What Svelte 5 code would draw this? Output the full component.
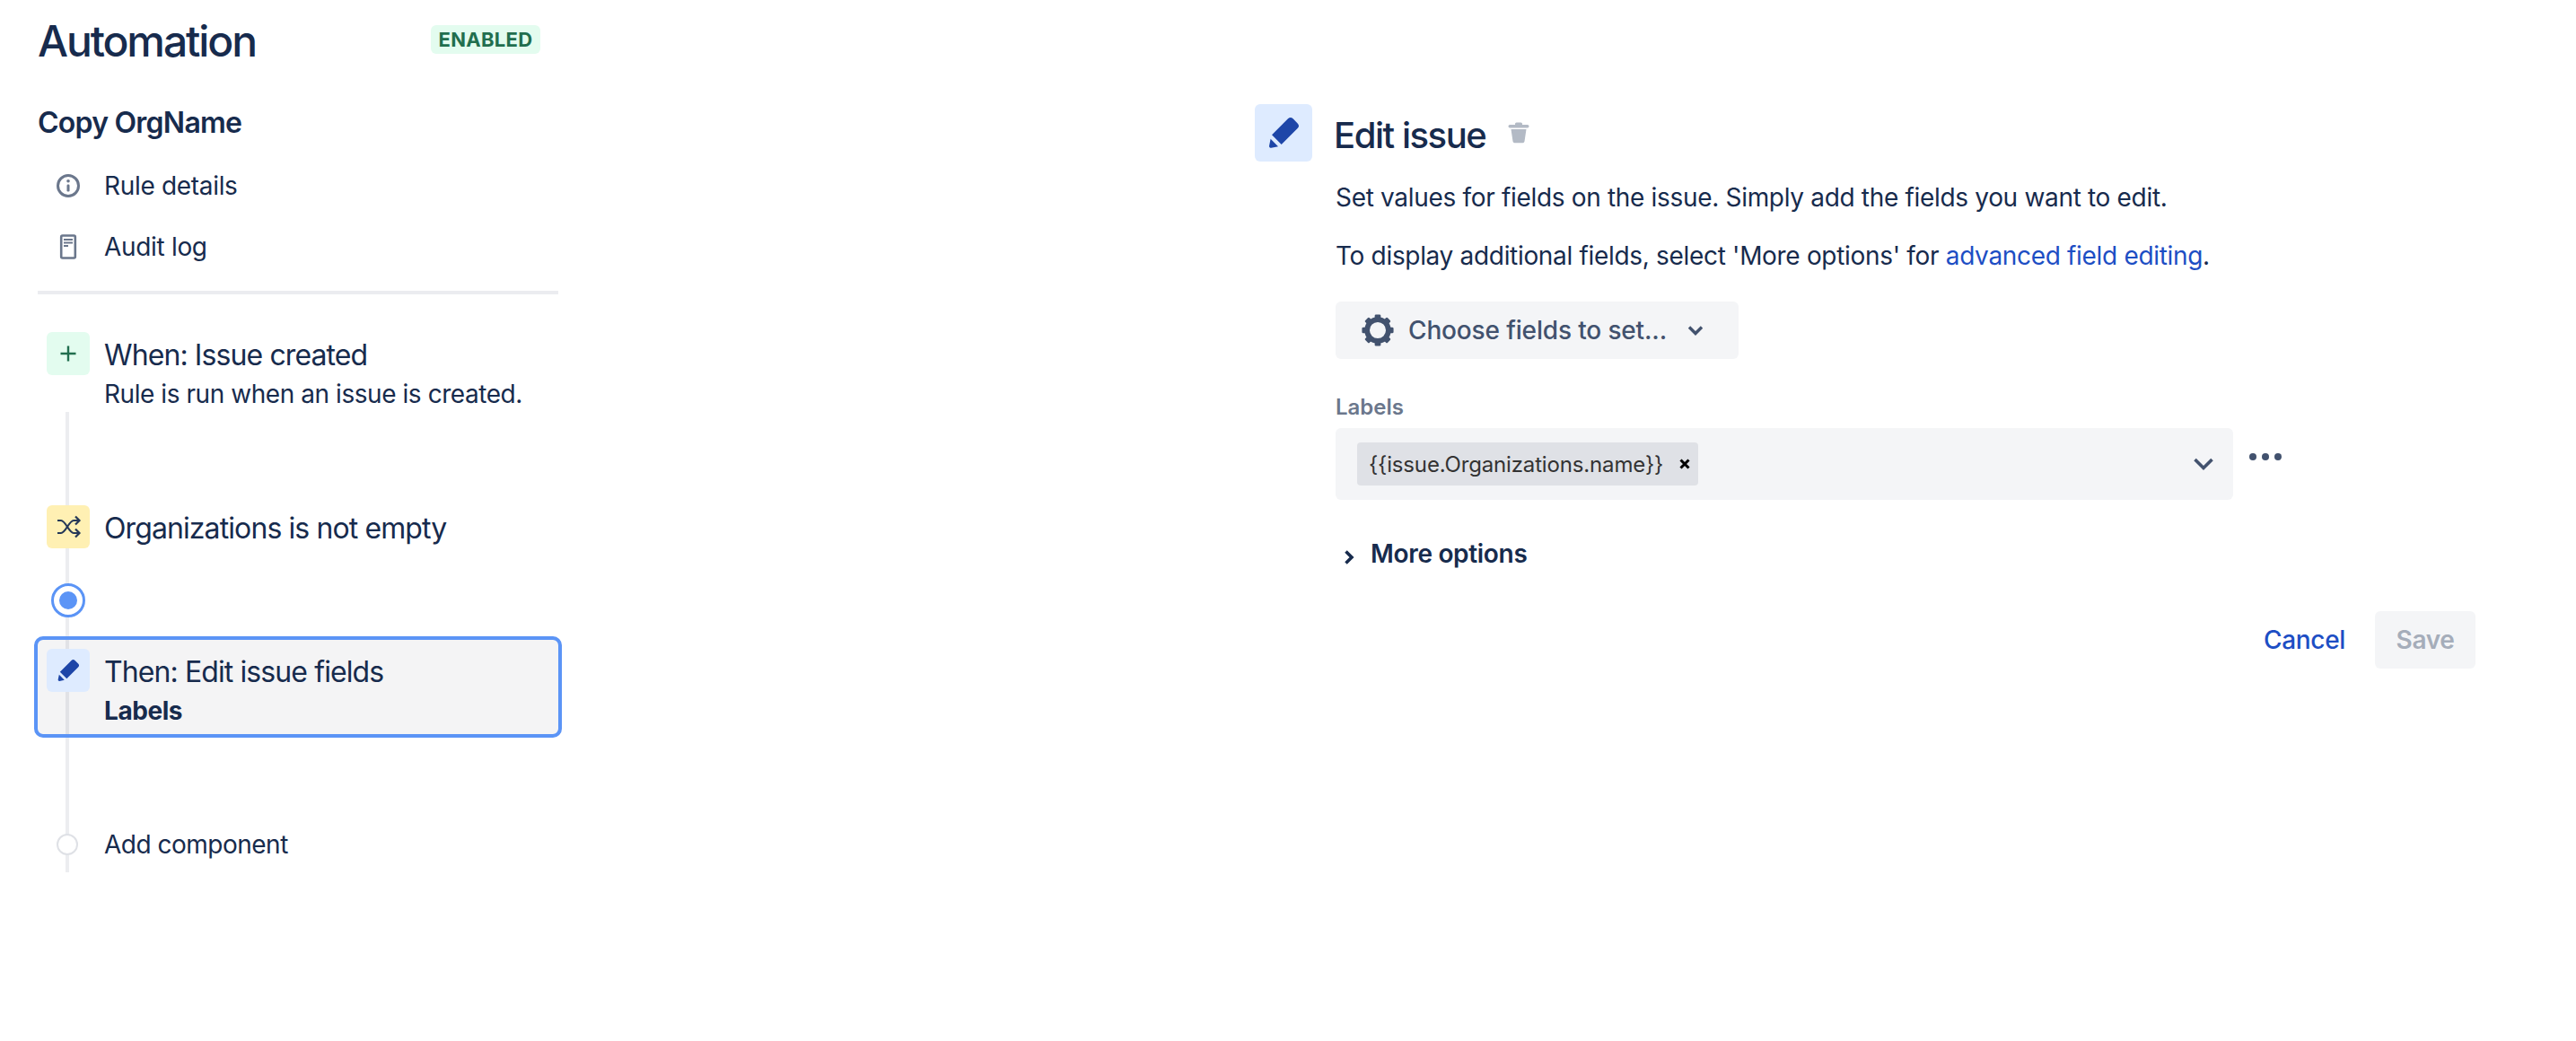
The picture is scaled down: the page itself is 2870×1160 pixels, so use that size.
<script lang="ts">
    /* Static data for the rule editor */
    const gearTeeth = [0, 45, 90, 135, 180, 225, 270, 315];
</script>

<!-- region HTML -->

<div class="page">
    <aside class="sidebar">
        <header class="top">
            <h1>Automation</h1>
            <span class="badge">ENABLED</span>
        </header>
        <h2>Copy OrgName</h2>

        <nav class="nav">
            <div class="nav-row">
                <svg class="nav-icon" viewBox="0 0 28 32">
                    <circle cx="14" cy="16" r="11.5" fill="none" stroke="#6b778c" stroke-width="3" />
                    <rect x="12.5" y="14.5" width="3" height="8" rx="1.2" fill="#6b778c" />
                    <circle cx="14" cy="10.8" r="1.8" fill="#6b778c" />
                </svg>
                <span>Rule details</span>
            </div>
            <div class="nav-row">
                <svg class="nav-icon" viewBox="0 0 28 32">
                    <rect x="6.2" y="3.5" width="15.6" height="25" rx="1.5" fill="none" stroke="#6b778c" stroke-width="2.6" />
                    <rect x="9" y="7" width="10" height="2" fill="#6b778c" />
                    <rect x="9" y="10.5" width="10" height="2" fill="#6b778c" />
                    <rect x="9" y="14" width="5" height="2" fill="#6b778c" />
                </svg>
                <span>Audit log</span>
            </div>
        </nav>

        <div class="divider"></div>

        <div class="timeline">
            <div class="line"></div>

            <div class="step first">
                <div class="tile green">
                    <svg viewBox="0 0 48 48" width="48" height="48">
                        <path d="M24 15.5v17M15.5 24h17" stroke="#216e4e" stroke-width="2.4" fill="none" />
                    </svg>
                </div>
                <div class="step-text">
                    <div class="step-title">When: Issue created</div>
                    <div class="step-sub">Rule is run when an issue is created.</div>
                </div>
            </div>

            <div class="step second">
                <div class="tile yellow">
                    <svg viewBox="0 0 48 48" width="48" height="48">
                        <path d="M12 17h4c5 0 9 14 14 14h6M12 31h4c5 0 9-14 14-14h6" stroke="#253858" stroke-width="2.2" fill="none" />
                        <path d="M32 12.5l4.5 4.5-4.5 4.5M32 26.5l4.5 4.5-4.5 4.5" stroke="#253858" stroke-width="2.2" fill="none" />
                    </svg>
                </div>
                <div class="step-text">
                    <div class="step-title">Organizations is not empty</div>
                </div>
            </div>

            <div class="radio"><div class="radio-dot"></div></div>

            <div class="step selected">
                <div class="tile blue">
                    <svg viewBox="0 0 24 24" width="34" height="34">
                        <path fill="#1e46a8" d="M4.02 19.23a1 1 0 0 0 1.18 1.18l3.81-.78-4.2-4.21-.79 3.81zM19.84 6.7l-2.52-2.52a2 2 0 0 0-2.83 0l-8.97 8.98 5.32 5.32 8.98-8.98a2 2 0 0 0 .02-2.8z" />
                    </svg>
                </div>
                <div class="step-text">
                    <div class="step-title">Then: Edit issue fields</div>
                    <div class="step-sub bold">Labels</div>
                </div>
            </div>

            <div class="add-row">
                <div class="add-dot"></div>
                <span>Add component</span>
            </div>
        </div>
    </aside>

    <main class="main">
        <div class="head">
            <div class="head-tile">
                <svg viewBox="0 0 24 24" width="48" height="48">
                    <path fill="#1e46a8" d="M4.02 19.23a1 1 0 0 0 1.18 1.18l3.81-.78-4.2-4.21-.79 3.81zM19.84 6.7l-2.52-2.52a2 2 0 0 0-2.83 0l-8.97 8.98 5.32 5.32 8.98-8.98a2 2 0 0 0 .02-2.8z" />
                </svg>
            </div>
            <h3>Edit issue</h3>
            <svg class="trash" viewBox="0 0 24 24" width="24" height="24">
                <rect x="0.5" y="3" width="23" height="3.4" rx="1.7" fill="#b3bac5" />
                <rect x="8" y="0.5" width="8" height="4" rx="1.5" fill="#b3bac5" />
                <path d="M3.5 8h17l-2 13.5a2 2 0 0 1-2 1.7h-9a2 2 0 0 1-2-1.7z" fill="#b3bac5" />
            </svg>
        </div>

        <div class="body">
            <p class="first-p">Set values for fields on the issue. Simply add the fields you want to edit.</p>
            <p class="second-p">To display additional fields, select 'More options' for <span class="link">advanced field editing</span>.</p>

            <div class="choose">
                <svg viewBox="0 0 40 40" width="38" height="38">
                    <circle cx="20" cy="20" r="12.5" fill="none" stroke="#42526e" stroke-width="6" />
                    {#each gearTeeth as angle}
                        <rect x="16.5" y="1.5" width="7" height="7" rx="1.5" fill="#42526e" transform="rotate({angle} 20 20)" />
                    {/each}
                </svg>
                <span>Choose fields to set...</span>
                <svg class="choose-chev" viewBox="0 0 18 12" width="18" height="12">
                    <path d="M2 2.5l7 7 7-7" fill="none" stroke="#42526e" stroke-width="3.4" />
                </svg>
            </div>

            <label class="field-label" for="labels-field">Labels</label>
            <div class="field-row">
                <div class="field" id="labels-field">
                    <div class="chip">
                        <span>{'{{issue.Organizations.name}}'}</span>
                        <svg viewBox="0 0 14 14" width="14" height="14">
                            <path d="M2.5 2.5l9 9M11.5 2.5l-9 9" stroke="#000" stroke-width="3" fill="none" />
                        </svg>
                    </div>
                    <svg class="field-chev" viewBox="0 0 24 16" width="24" height="16">
                        <path d="M2.5 3l9.5 9.5L21.5 3" fill="none" stroke="#42526e" stroke-width="3.6" />
                    </svg>
                </div>
                <div class="dots"><i></i><i></i><i></i></div>
            </div>

            <div class="more">
                <svg viewBox="0 0 12 18" width="12" height="18">
                    <path d="M2.5 2.5L9 9l-6.5 6.5" fill="none" stroke="#172b4d" stroke-width="3.6" />
                </svg>
                <span>More options</span>
            </div>
        </div>

        <div class="footer">
            <span class="cancel">Cancel</span>
            <span class="save">Save</span>
        </div>
    </main>
</div>

<!-- region CSS -->

<style>
    :global(body) {
        margin: 0;
        background: #fff;
    }

    .page {
        display: flex;
        height: 1160px;
        font-family: Inter, "Liberation Sans", sans-serif;
        font-size: 28px;
        letter-spacing: -0.32px;
        color: #172b4d;
    }

    .sidebar {
        width: 580px;
        margin-left: 42px;
    }

    .top {
        height: 90px;
        display: flex;
        align-items: center;
        justify-content: space-between;
        padding-right: 20px;
    }

    h1 {
        margin: 0;
        font-size: 48px;
        font-weight: 500;
        letter-spacing: -2.1px;
    }

    .badge {
        width: 122px;
        height: 32px;
        margin-top: -2px;
        border-radius: 6px;
        background: #e3fcef;
        color: #216e4e;
        font-size: 22px;
        font-weight: 700;
        letter-spacing: 0.3px;
        line-height: 32px;
        text-align: center;
    }

    h2 {
        margin: 27px 0 0;
        font-size: 32px;
        font-weight: 600;
        letter-spacing: -0.76px;
        line-height: 40px;
    }

    .nav {
        margin-top: 16px;
    }

    .nav-row {
        display: flex;
        align-items: center;
        height: 68px;
        padding-left: 20px;
    }

    .nav-icon {
        width: 28px;
        height: 32px;
        margin-right: 26px;
    }

    .divider {
        height: 4px;
        margin-top: 15px;
        background: #ebecf0;
    }

    .timeline {
        position: relative;
    }

    .line {
        position: absolute;
        left: 31px;
        top: 89px;
        width: 4px;
        height: 513px;
        background: rgba(9, 30, 66, 0.08);
        z-index: 1;
    }

    .step {
        display: flex;
        gap: 16px;
        padding-left: 10px;
    }

    .first {
        margin-top: 42px;
    }

    .second {
        margin-top: 104px;
    }

    .tile {
        position: relative;
        z-index: 2;
        flex: none;
        width: 48px;
        height: 48px;
        border-radius: 6px;
        display: flex;
        align-items: center;
        justify-content: center;
    }

    .green { background: #e3fcef; }
    .yellow { background: #fff0b3; }
    .blue { background: #deebff; }

    .step-text {
        padding-top: 3px;
    }

    .step-title {
        font-size: 32px;
        letter-spacing: -0.9px;
        line-height: 46px;
    }

    .step-sub {
        letter-spacing: -0.44px;
        line-height: 40px;
    }

    .bold {
        font-weight: 700;
    }

    .radio {
        position: relative;
        z-index: 2;
        box-sizing: border-box;
        width: 38px;
        height: 38px;
        margin: 38px 0 0 15px;
        border: 3px solid #5b94f6;
        border-radius: 50%;
        background: #fff;
        display: flex;
        align-items: center;
        justify-content: center;
    }

    .radio-dot {
        width: 20px;
        height: 20px;
        border-radius: 50%;
        background: #5b94f6;
    }

    .selected {
        position: relative;
        box-sizing: border-box;
        height: 113px;
        margin: 21px -4px 0;
        padding: 14px 0 0 14px;
        border-radius: 10px;
        background: #f4f4f5;
    }

    .selected::after {
        content: "";
        position: absolute;
        inset: 0;
        z-index: 2;
        border: 4px solid #5b94f6;
        border-radius: 10px;
    }

    .add-row {
        display: flex;
        align-items: center;
        height: 48px;
        margin-top: 95px;
        padding-left: 21px;
        letter-spacing: -0.5px;
    }

    .add-dot {
        position: relative;
        z-index: 2;
        box-sizing: border-box;
        flex: none;
        width: 24px;
        height: 24px;
        margin-right: 29px;
        border: 2px solid #dfe1e6;
        border-radius: 50%;
        background: #fff;
    }

    .main {
        width: 1360px;
        margin-left: 776px;
        padding-top: 116px;
    }

    .head {
        display: flex;
        align-items: center;
        height: 64px;
    }

    .head-tile {
        width: 64px;
        height: 64px;
        border-radius: 6px;
        background: #deebff;
        display: flex;
        align-items: center;
        justify-content: center;
    }

    h3 {
        margin: 5px 0 0 24px;
        font-size: 40px;
        font-weight: 500;
        letter-spacing: -1.46px;
        line-height: 48px;
    }

    .trash {
        margin: 0 0 0 25px;
    }

    .body {
        padding-left: 90px;
    }

    p {
        margin: 0;
        line-height: 40px;
    }

    .first-p {
        margin-top: 20px;
    }

    .second-p {
        margin-top: 25px;
    }

    .link {
        color: #1d4ec4;
    }

    .choose {
        display: inline-flex;
        align-items: center;
        box-sizing: border-box;
        width: 449px;
        height: 64px;
        margin-top: 31px;
        padding-left: 28px;
        border-radius: 6px;
        background: #f4f5f7;
        color: #42526e;
        font-weight: 500;
        letter-spacing: -0.15px;
    }

    .choose span {
        margin-left: 15px;
    }

    .choose-chev {
        margin-left: 23px;
    }

    .field-label {
        display: block;
        margin-top: 38px;
        color: #6b778c;
        font-size: 24px;
        font-weight: 600;
        letter-spacing: 0;
        line-height: 32px;
    }

    .field-row {
        display: flex;
        margin-top: 7px;
    }

    .field {
        box-sizing: border-box;
        display: flex;
        align-items: center;
        justify-content: space-between;
        width: 1000px;
        height: 80px;
        padding: 0 21px 0 24px;
        border-radius: 6px;
        background: #f4f5f7;
    }

    .chip {
        box-sizing: border-box;
        display: flex;
        align-items: center;
        height: 48px;
        width: 380px;
        padding-left: 13px;
        border-radius: 4px;
        background: #dfe1e6;
        color: #333;
        font-size: 24px;
        letter-spacing: -0.15px;
    }

    .chip svg {
        margin-left: 17px;
    }

    .dots {
        display: flex;
        gap: 6px;
        margin: 28px 0 0 18px;
    }

    .dots i {
        width: 8px;
        height: 8px;
        border-radius: 50%;
        background: #42526e;
    }

    .more {
        display: flex;
        align-items: center;
        height: 40px;
        margin-top: 40px;
        font-weight: 600;
    }

    .more svg {
        margin: 8px 18px 0 9px;
    }

    .footer {
        display: flex;
        align-items: center;
        justify-content: flex-end;
        gap: 33px;
        margin-top: 44px;
    }

    .cancel {
        color: #1d4ec4;
        font-weight: 500;
    }

    .save {
        box-sizing: border-box;
        width: 112px;
        height: 64px;
        border-radius: 6px;
        background: #f4f5f7;
        color: #a5adba;
        font-weight: 600;
        line-height: 64px;
        text-align: center;
    }
</style>
